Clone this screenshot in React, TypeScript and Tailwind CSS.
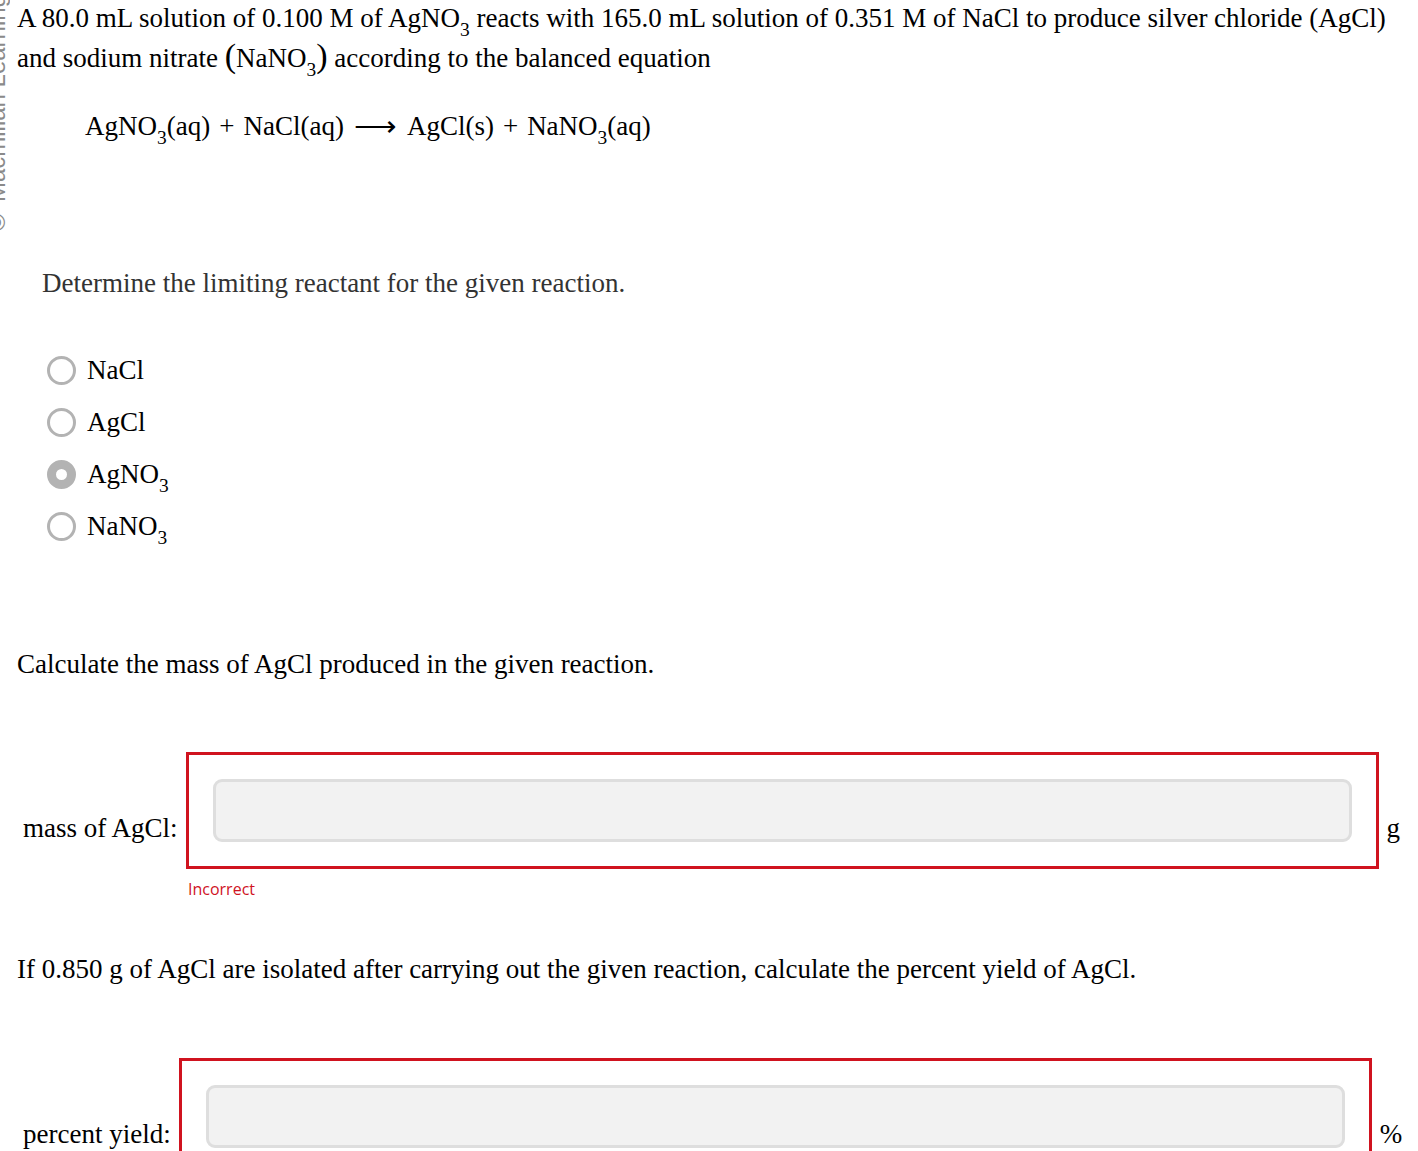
import React from 'react';

function Sub({ children }: { children: React.ReactNode }) {
  return <sub className="relative top-[0.14em] text-[0.72em] align-sub leading-none">{children}</sub>;
}

function Radio({ label, checked }: { label: React.ReactNode; checked?: boolean }) {
  return (
    <label className="flex items-center gap-[11px] h-[52px]">
      {checked ? (
        <span className="w-[29px] h-[29px] rounded-full border-[9px] border-[#b3b3b3] bg-white" />
      ) : (
        <span className="w-[29px] h-[29px] rounded-full border-[3px] border-[#b3b3b3] bg-white" />
      )}
      <span className="text-black">{label}</span>
    </label>
  );
}

function AnswerRow({ label, unit }: { label: string; unit: string }) {
  return (
    <div className="flex items-center gap-[8px]">
      <span className="pl-[23px] pt-[36px]">{label}</span>
      <div className="w-[1193px] shrink-0 border-[3px] border-[#d0131f] p-[24px]">
        <div className="h-[63px] rounded-[9px] border-[3px] border-[#dedede] bg-[#f2f2f2]" />
      </div>
      <span className="pt-[36px]">{unit}</span>
    </div>
  );
}

export default function App() {
  return (
    <div className="relative h-[1151px] w-full overflow-hidden bg-white text-[27px] text-black font-['Liberation_Serif',serif]">
      <span className="absolute left-[-15px] top-[-6px] rotate-180 [writing-mode:vertical-rl] whitespace-nowrap leading-none text-[24px] text-[#8a8a8a] font-['Liberation_Sans',sans-serif]">
        © Macmillan Learning
      </span>

      <p className="mt-[-2px] pl-[17px] pr-[20px] leading-[40px]">
        A 80.0 mL solution of 0.100 M of AgNO<Sub>3</Sub> reacts with 165.0 mL solution of 0.351 M of NaCl to produce silver chloride (AgCl) and sodium nitrate{' '}
        <span className="text-[34px] leading-none">(</span>NaNO<Sub>3</Sub><span className="text-[34px] leading-none">)</span> according to the balanced equation
      </p>

      <p className="pl-[85px] pt-[28px] leading-[40px] whitespace-nowrap">
        AgNO<Sub>3</Sub>(aq)<span className="mx-[9px]">+</span>NaCl(aq)<span className="mx-[12px] inline-block scale-x-110">⟶</span>AgCl(s)<span className="mx-[9px]">+</span>NaNO<Sub>3</Sub>(aq)
      </p>

      <p className="pl-[42px] pt-[117px] text-[#333]">Determine the limiting reactant for the given reaction.</p>

      <div className="pl-[47px] pt-[41px] flex flex-col">
        <Radio label="NaCl" />
        <Radio label="AgCl" />
        <Radio label={<>AgNO<Sub>3</Sub></>} checked />
        <Radio label={<>NaNO<Sub>3</Sub></>} />
      </div>

      <p className="pl-[17px] pt-[91px]">Calculate the mass of AgCl produced in the given reaction.</p>

      <div className="pt-[68px]">
        <AnswerRow label="mass of AgCl:" unit="g" />
        <p className="pl-[188px] pt-[8px] text-[16px] text-[#d0131f] font-['Open_Sans',sans-serif]">Incorrect</p>
      </div>

      <p className="pl-[17px] pt-[48px]">If 0.850 g of AgCl are isolated after carrying out the given reaction, calculate the percent yield of AgCl.</p>

      <div className="pt-[68px]">
        <AnswerRow label="percent yield:" unit="%" />
      </div>
    </div>
  );
}
